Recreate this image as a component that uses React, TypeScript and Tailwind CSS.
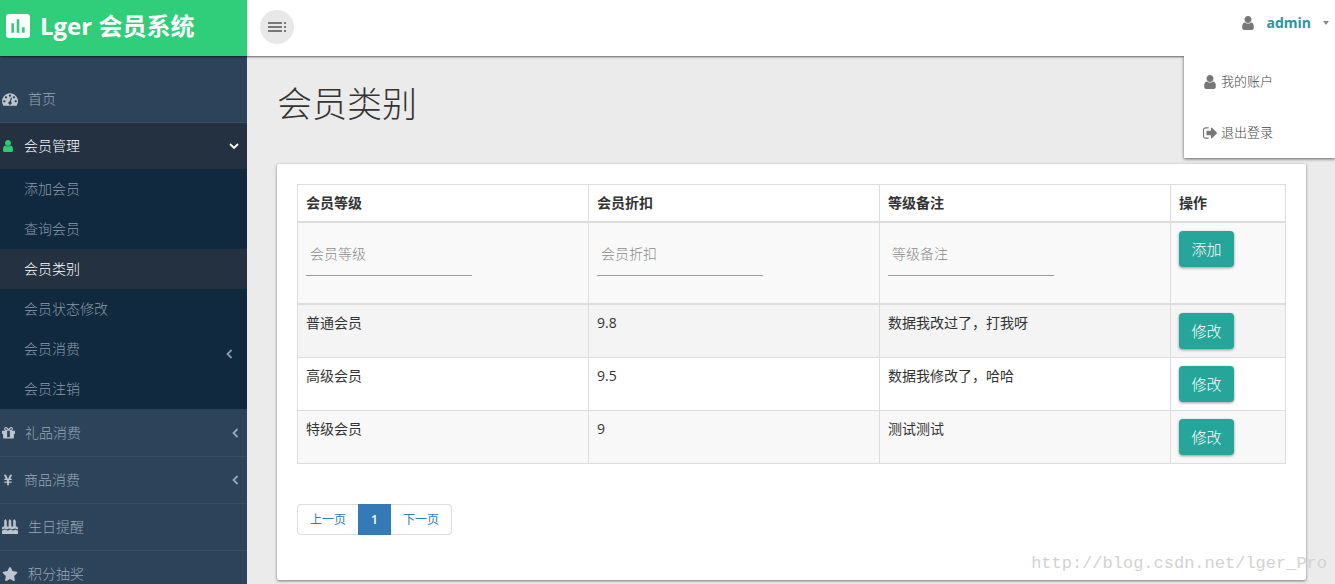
import { useState, type ReactNode } from "react";
import clsx from "clsx";
import { FaStar, FaYenSign } from "react-icons/fa";
import { MdInsertChart, MdToc } from "react-icons/md";

/* ---- Icons ---- */

interface IconProps {
  className?: string;
}

function UserIcon({ className }: IconProps) {
  return (
    <svg viewBox="256 128 1280 1536" fill="currentColor" className={className} aria-hidden="true">
      <path d="M1536 1399q0 109-62.5 187t-150.5 78h-854q-88 0-150.5-78t-62.5-187q0-85 8.5-160.5t31.5-152 58.5-131 94-89 134.5-34.5q131 128 313 128t313-128q76 0 134.5 34.5t94 89 58.5 131 31.5 152 8.5 160.5zm-256-887q0 159-112.5 271.5t-271.5 112.5-271.5-112.5-112.5-271.5 112.5-271.5 271.5-112.5 271.5 112.5 112.5 271.5z" />
    </svg>
  );
}

function DashboardIcon({ className }: IconProps) {
  return (
    <svg viewBox="0 128 1792 1536" fill="currentColor" className={className} aria-hidden="true">
      <path d="M384 1152q0-53-37.5-90.5t-90.5-37.5-90.5 37.5-37.5 90.5 37.5 90.5 90.5 37.5 90.5-37.5 37.5-90.5zm192-448q0-53-37.5-90.5t-90.5-37.5-90.5 37.5-37.5 90.5 37.5 90.5 90.5 37.5 90.5-37.5 37.5-90.5zm428 481l101-382q6-26-7.5-48.5t-38.5-29.5-48 6.5-30 39.5l-101 382q-60 5-107 43.5t-63 98.5q-20 77 20 146t117 89 146-20 89-117q16-60-6-117t-72-91zm660-33q0-53-37.5-90.5t-90.5-37.5-90.5 37.5-37.5 90.5 37.5 90.5 90.5 37.5 90.5-37.5 37.5-90.5zm-640-640q0-53-37.5-90.5t-90.5-37.5-90.5 37.5-37.5 90.5 37.5 90.5 90.5 37.5 90.5-37.5 37.5-90.5zm448 192q0-53-37.5-90.5t-90.5-37.5-90.5 37.5-37.5 90.5 37.5 90.5 90.5 37.5 90.5-37.5 37.5-90.5zm320 448q0 261-141 483-19 29-54 29h-1402q-35 0-54-29-141-221-141-483 0-182 71-348t191-286 286-191 348-71 348 71 286 191 191 286 71 348z" />
    </svg>
  );
}

function GiftIcon({ className }: IconProps) {
  return (
    <svg viewBox="128 256 1536 1280" fill="currentColor" className={className} aria-hidden="true">
      <path d="M1056 1356v-716h-320v716q0 25 18 38.5t46 13.5h192q28 0 46-13.5t18-38.5zm-456-844h195l-126-161q-26-31-69-31-40 0-68 28t-28 68 28 68 68 28zm688-96q0-40-28-68t-68-28q-43 0-69 31l-125 161h194q40 0 68-28t28-68zm376 256v320q0 14-9 23t-23 9h-96v416q0 40-28 68t-68 28h-1088q-40 0-68-28t-28-68v-416h-96q-14 0-23-9t-9-23v-320q0-14 9-23t23-9h440q-93 0-158.5-65.5t-65.5-158.5 65.5-158.5 158.5-65.5q107 0 168 77l128 165 128-165q61-77 168-77 93 0 158.5 65.5t65.5 158.5-65.5 158.5-158.5 65.5h440q14 0 23 9t9 23z" />
    </svg>
  );
}

function CakeIcon({ className }: IconProps) {
  return (
    <svg viewBox="0 0 16 16" fill="currentColor" className={className} aria-hidden="true">
      <path d="M2.2 1.6 3.4 0l1.400 2V8H2.200zM6.700 1.600 7.900 0l1.400 2V8H6.700zM11.200 1.600 12.400 0l1.400 2V8h-2.600z" />
      <path d="M1.500 7.500h13Q16 7.500 16 9v1.300q-1.300 0-2.600-.9-1.400 0-2.700.9-1.300 0-2.700-.9-1.400 0-2.700.9-1.300 0-2.700-.9-1.300.9-2.600.9V9q0-1.500 1.500-1.500z" />
      <path d="M0 11.500q1.300 0 2.600-.9 1.400 0 2.700.9 1.300 0 2.700-.9 1.400 0 2.700.9 1.300 0 2.700-.9 1.300.9 2.600.9V15H0z" />
    </svg>
  );
}

function SignOutIcon({ className }: IconProps) {
  return (
    <svg viewBox="64 256 1568 1280" fill="currentColor" className={className} aria-hidden="true">
      <path d="M704 1440q0 4 1 20t.5 26.500-3 23.500-10 19.500-20.500 6.500h-320q-119 0-203.500-84.500t-84.500-203.500v-704q0-119 84.500-203.500t203.500-84.500h320q13 0 22.500 9.500t9.500 22.500q0 4 1 20t.5 26.500-3 23.500-10 19.500-20.500 6.500h-320q-66 0-113 47t-47 113v704q0 66 47 113t113 47h312l11.500 1 11.500 3 8 5.500 7 9 2 13.500zm928-544q0 26-19 45l-544 544q-19 19-45 19t-45-19-19-45v-288h-448q-26 0-45-19t-19-45v-384q0-26 19-45t45-19h448v-288q0-26 19-45t45-19 45 19l544 544q19 19 19 45z" />
    </svg>
  );
}

function Chevron({ open }: { open?: boolean }) {
  return (
    <svg
      viewBox="0 0 10 10"
      fill="none"
      stroke="currentColor"
      strokeWidth="1.800"
      className="h-2.5 w-2.5 shrink-0"
      aria-hidden="true"
    >
      <path d={open ? "M1 3l4 4 4-4" : "M8.500 1L4.500 5l4 4"} />
    </svg>
  );
}

/* ---- Sidebar ---- */

const SUB_ITEMS = [
  { label: "添加会员" },
  { label: "查询会员" },
  { label: "会员类别", active: true },
  { label: "会员状态修改" },
  { label: "会员消费", nested: true },
  { label: "会员注销" },
];

interface NavItemProps {
  icon: ReactNode;
  label: string;
  open?: boolean;
  nested?: boolean;
}

function NavItem({ icon, label, open, nested }: NavItemProps) {
  return (
    <a
      href="#"
      className={clsx(
        "flex items-center gap-2.5 pl-0.5 pr-2",
        open
          ? "h-[46px] bg-[#233140] text-white"
          : "h-[47px] border-b border-[#384e63] text-[#98a7b6]",
      )}
    >
      <span className={clsx("flex", open ? "text-[#2ecc71]" : "text-[#bcc5cd]")}>{icon}</span>
      <span className="flex-1">{label}</span>
      {(open || nested) && <Chevron open={open} />}
    </a>
  );
}

function Sidebar() {
  return (
    <nav className="w-[247px] shrink-0 overflow-hidden bg-[#2d4359] pt-5 text-sm font-light">
      <NavItem icon={<DashboardIcon className="h-3.5 w-4" />} label="首页" />
      <NavItem icon={<UserIcon className="h-3 w-3" />} label="会员管理" open />
      <ul className="mb-px bg-[#10293e]">
        {SUB_ITEMS.map((item) => (
          <li key={item.label}>
            <a
              href="#"
              className={clsx(
                "flex h-10 items-center justify-between pl-6 pr-3.5",
                item.active ? "bg-[#233140] text-white" : "text-[#8a9aaa]",
              )}
            >
              {item.label}
              {item.nested && (
                <span className="pt-2.5">
                  <Chevron />
                </span>
              )}
            </a>
          </li>
        ))}
      </ul>
      <NavItem icon={<GiftIcon className="h-3 w-[13px]" />} label="礼品消费" nested />
      <NavItem icon={<FaYenSign className="h-3 w-3" />} label="商品消费" nested />
      <NavItem icon={<CakeIcon className="h-4 w-4" />} label="生日提醒" />
      <NavItem icon={<FaStar className="h-3.5 w-4" />} label="积分抽奖" />
    </nav>
  );
}

/* ---- Top bar ---- */

function TopBar() {
  return (
    <header className="relative z-10 flex h-14 shrink-0 bg-white shadow-[0_1px_2px_rgba(0,0,0,0.6)]">
      <a
        href="#"
        className="flex w-[247px] shrink-0 items-center gap-1.5 bg-[#30cd7b] pb-1 pl-0.5 text-2xl font-bold text-white"
      >
        <MdInsertChart className="h-8 w-8" />
        Lger 会员系统
      </a>
      <div className="flex flex-1 items-center justify-between pb-0.5 pl-[13px]">
        <button
          type="button"
          aria-label="切换菜单"
          className="flex h-[34px] w-[34px] items-center justify-center rounded-full bg-[#e8e8e8] text-[#777]"
        >
          <MdToc className="h-6 w-6" />
        </button>
        <button
          type="button"
          aria-haspopup="menu"
          className="flex items-center gap-3 pb-2 pr-1.5 text-sm font-bold text-[#2a95a5]"
        >
          <UserIcon className="h-3.5 w-3 text-[#777]" />
          admin
          <span className="border-x-[3px] border-t-4 border-x-transparent border-t-[#888]" />
        </button>
      </div>
      <ul className="absolute right-0 top-full w-[151px] bg-white text-[13px] font-light text-[#444] shadow-[0_1px_3px_rgba(0,0,0,0.6)] [clip-path:inset(0_0_-6px_-6px)]">
        <li>
          <a href="#" className="flex h-[51px] items-center gap-1 pl-[19px]">
            <span className="flex w-3.5 justify-center">
              <UserIcon className="h-3.5 w-3 text-[#777]" />
            </span>
            我的账户
          </a>
        </li>
        <li>
          <a href="#" className="flex h-[51px] items-center gap-1 pl-[19px]">
            <SignOutIcon className="h-3 w-3.5 text-[#777]" />
            退出登录
          </a>
        </li>
      </ul>
    </header>
  );
}

/* ---- Level table ---- */

const COLUMNS = ["会员等级", "会员折扣", "等级备注"];

const LEVELS = [
  { name: "普通会员", discount: "9.8", note: "数据我改过了，打我呀", bg: "bg-[#f4f4f4]" },
  { name: "高级会员", discount: "9.5", note: "数据我修改了，哈哈", bg: "bg-white" },
  { name: "特级会员", discount: "9", note: "测试测试", bg: "bg-[#f8f8f8]" },
];

const CELL = "border border-[#ddd] p-2 text-left align-top";

function ActionButton({ children }: { children: ReactNode }) {
  return (
    <button
      type="button"
      className="block h-9 w-[55px] rounded bg-[#26a69a] text-[15px] font-light text-white shadow-[0_1px_3px_rgba(0,0,0,0.4)]"
    >
      {children}
    </button>
  );
}

function LevelTable() {
  const [draft, setDraft] = useState<Record<string, string>>({});

  return (
    <table className="w-full table-fixed border-collapse text-sm leading-5 text-[#333]">
      <colgroup>
        <col />
        <col />
        <col />
        <col className="w-[115px]" />
      </colgroup>
      <thead>
        <tr>
          {COLUMNS.map((label) => (
            <th key={label} scope="col" className={clsx(CELL, "font-bold")}>
              {label}
            </th>
          ))}
          <th scope="col" className={clsx(CELL, "font-bold")}>
            操作
          </th>
        </tr>
      </thead>
      <tbody>
        <tr className="border-y-2 border-[#ddd] bg-[#f9f9f9]">
          {COLUMNS.map((label) => (
            <td key={label} className="border-x border-[#ddd] px-2 pt-2 pb-[27px] align-top">
              <input
                type="text"
                aria-label={label}
                placeholder={label}
                value={draft[label] ?? ""}
                onChange={(e) => setDraft({ ...draft, [label]: e.target.value })}
                className="block h-[45px] w-[166px] border-b border-[#9e9e9e] bg-transparent pl-1 font-light outline-none placeholder:text-[#8a8a8a]"
              />
            </td>
          ))}
          <td className="border-x border-[#ddd] p-2 align-top">
            <ActionButton>添加</ActionButton>
          </td>
        </tr>
        {LEVELS.map((level) => (
          <tr key={level.name} className={level.bg}>
            <td className={CELL}>{level.name}</td>
            <td className={CELL}>{level.discount}</td>
            <td className={CELL}>{level.note}</td>
            <td className={CELL}>
              <ActionButton>修改</ActionButton>
            </td>
          </tr>
        ))}
      </tbody>
    </table>
  );
}

function Pagination() {
  return (
    <nav aria-label="分页" className="mt-10 flex text-xs text-[#337ab7]">
      <a href="#" className="flex h-[31px] items-center rounded-l border border-r-0 border-[#ddd] px-3">
        上一页
      </a>
      <a
        href="#"
        aria-current="page"
        className="flex h-[31px] w-[33px] items-center justify-center bg-[#337ab7] font-semibold text-white"
      >
        1
      </a>
      <a href="#" className="flex h-[31px] items-center rounded-r border border-l-0 border-[#ddd] px-3">
        下一页
      </a>
    </nav>
  );
}

export default function App() {
  return (
    <div className="relative flex h-screen flex-col overflow-hidden bg-[#ebebeb] font-['Open_Sans','Noto_Sans_CJK_SC',sans-serif]">
      <TopBar />
      <div className="flex min-h-0 flex-1">
        <Sidebar />
        <main className="min-w-0 flex-1 pl-[30px] pr-[29px] pt-6">
          <h1 className="mb-9 text-[35px] leading-12 font-light text-[#333]">会员类别</h1>
          <section className="rounded-xs bg-white px-5 pb-[45px] pt-5 shadow-[0_1px_3px_rgba(0,0,0,0.5)]">
            <LevelTable />
            <Pagination />
          </section>
        </main>
      </div>
      <p className="pointer-events-none absolute bottom-1.5 right-2 font-['Liberation_Mono',monospace] text-[17px] leading-7 text-[#d2d2d2]">
        http://blog.csdn.net/lger_Pro
      </p>
    </div>
  );
}
